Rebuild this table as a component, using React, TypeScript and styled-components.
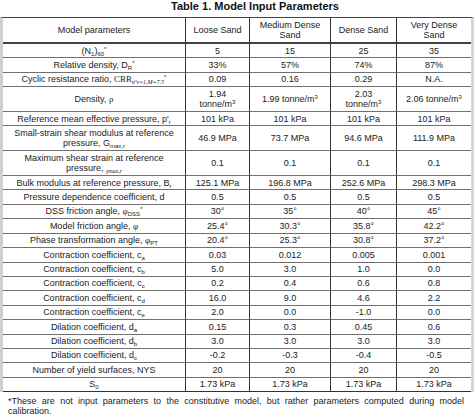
import React from "react";
import styled, { createGlobalStyle } from "styled-components";

const GlobalStyle = createGlobalStyle`
  html, body {
    margin: 0;
    padding: 0;
    background: #fff;
  }
  body {
    font-family: "Liberation Sans", Arial, sans-serif;
    color: #222;
  }
  * {
    box-sizing: border-box;
  }
`;

const Page = styled.div`
  width: 474px;
`;

const Title = styled.h1`
  margin: 0 0 5px;
  padding-left: 36px;
  font-size: 11px;
  line-height: 12px;
  font-weight: bold;
  text-align: center;
  color: #111;
`;

const Table = styled.table`
  width: 474px;
  table-layout: fixed;
  border-collapse: separate;
  border-spacing: 0;
  border-top: 1px solid #444;
  border-left: 3px solid #cfcfcf;
  border-right: 3px solid #d6d6d6;
`;

const HeadCell = styled.th<{ $first?: boolean }>`
  font-weight: normal;
  font-size: 9px;
  line-height: 10.5px;
  padding: 1.5px 3px;
  height: 26px;
  text-align: center;
  vertical-align: middle;
  border-bottom: 2px solid #444;
  border-left: ${(p) => (p.$first ? "none" : "1px solid #333")};
`;

const Cell = styled.td<{ $first?: boolean; $last?: boolean }>`
  font-size: 9px;
  line-height: 10.4px;
  padding: 1.5px 3px;
  text-align: center;
  vertical-align: middle;
  white-space: nowrap;
  border-bottom: 1px solid ${(p) => (p.$last ? "#333" : "#707070")};
  border-left: ${(p) => (p.$first ? "none" : "1px solid #333")};
`;

const Sub = styled.sub`
  font-size: 6px;
  line-height: 0;
  vertical-align: -1.5px;
`;

const Sup = styled.sup`
  font-size: 6px;
  line-height: 0;
  vertical-align: 3px;
`;

const Serif = styled.span`
  font-family: "Liberation Serif", "Times New Roman", serif;
`;

const SerifSub = styled(Sub)`
  font-family: "Liberation Serif", "Times New Roman", serif;
  font-style: italic;
`;

const Footnote = styled.p`
  margin: 4px 10px 0 8px;
  font-size: 9px;
  line-height: 10px;
  text-align: justify;
  text-align-last: left;
`;

type Row = { label: React.ReactNode; values: React.ReactNode[] };

const all = (v: string) => [v, v, v, v];

const rows: Row[] = [
  {
    label: (
      <>
        (N<Sub>1</Sub>)<Sub>60</Sub>
        <Sup>*</Sup>
      </>
    ),
    values: ["5", "15", "25", "35"],
  },
  {
    label: (
      <>
        Relative density, D<Sub>R</Sub>
        <Sup>*</Sup>
      </>
    ),
    values: ["33%", "57%", "74%", "87%"],
  },
  {
    label: (
      <>
        Cyclic resistance ratio,{" "}
        <Serif>
          CRR<SerifSub>σ'v=1,M=7.5</SerifSub>
        </Serif>
        <Sup>*</Sup>
      </>
    ),
    values: ["0.09", "0.16", "0.29", "N.A."],
  },
  {
    label: (
      <>
        Density, <Serif>ρ</Serif>
      </>
    ),
    values: [
      <>
        1.94
        <br />
        tonne/m<Sup>3</Sup>
      </>,
      <>
        1.99 tonne/m<Sup>3</Sup>
      </>,
      <>
        2.03
        <br />
        tonne/m<Sup>3</Sup>
      </>,
      <>
        2.06 tonne/m<Sup>3</Sup>
      </>,
    ],
  },
  {
    label: (
      <>
        Reference mean effective pressure, p'<Sub>r</Sub>
      </>
    ),
    values: all("101 kPa"),
  },
  {
    label: (
      <>
        Small-strain shear modulus at reference
        <br />
        pressure, G<Sub>max,r</Sub>
      </>
    ),
    values: ["46.9 MPa", "73.7 MPa", "94.6 MPa", "111.9 MPa"],
  },
  {
    label: (
      <>
        Maximum shear strain at reference
        <br />
        pressure, <SerifSub>γmax,r</SerifSub>
      </>
    ),
    values: all("0.1"),
  },
  {
    label: (
      <>
        Bulk modulus at reference pressure, B<Sub>r</Sub>
      </>
    ),
    values: ["125.1 MPa", "196.8 MPa", "252.6 MPa", "298.3 MPa"],
  },
  { label: "Pressure dependence coefficient, d", values: all("0.5") },
  {
    label: (
      <>
        DSS friction angle, <Serif>φ</Serif>
        <Sub>DSS</Sub>
        <Sup>*</Sup>
      </>
    ),
    values: ["30°", "35°", "40°", "45°"],
  },
  {
    label: (
      <>
        Model friction angle, <Serif>φ</Serif>
      </>
    ),
    values: ["25.4°", "30.3°", "35.8°", "42.2°"],
  },
  {
    label: (
      <>
        Phase transformation angle, <Serif>φ</Serif>
        <Sub>PT</Sub>
      </>
    ),
    values: ["20.4°", "25.3°", "30.8°", "37.2°"],
  },
  {
    label: (
      <>
        Contraction coefficient, c<Sub>a</Sub>
      </>
    ),
    values: ["0.03", "0.012", "0.005", "0.001"],
  },
  {
    label: (
      <>
        Contraction coefficient, c<Sub>b</Sub>
      </>
    ),
    values: ["5.0", "3.0", "1.0", "0.0"],
  },
  {
    label: (
      <>
        Contraction coefficient, c<Sub>c</Sub>
      </>
    ),
    values: ["0.2", "0.4", "0.6", "0.8"],
  },
  {
    label: (
      <>
        Contraction coefficient, c<Sub>d</Sub>
      </>
    ),
    values: ["16.0", "9.0", "4.6", "2.2"],
  },
  {
    label: (
      <>
        Contraction coefficient, c<Sub>e</Sub>
      </>
    ),
    values: ["2.0", "0.0", "-1.0", "0.0"],
  },
  {
    label: (
      <>
        Dilation coefficient, d<Sub>a</Sub>
      </>
    ),
    values: ["0.15", "0.3", "0.45", "0.6"],
  },
  {
    label: (
      <>
        Dilation coefficient, d<Sub>b</Sub>
      </>
    ),
    values: all("3.0"),
  },
  {
    label: (
      <>
        Dilation coefficient, d<Sub>c</Sub>
      </>
    ),
    values: ["-0.2", "-0.3", "-0.4", "-0.5"],
  },
  { label: "Number of yield surfaces, NYS", values: all("20") },
  {
    label: (
      <>
        S<Sub>0</Sub>
      </>
    ),
    values: all("1.73 kPa"),
  },
];

const headers: React.ReactNode[] = [
  "Loose Sand",
  <>
    Medium Dense
    <br />
    Sand
  </>,
  "Dense Sand",
  <>
    Very Dense
    <br />
    Sand
  </>,
];

const widths = [182, 64, 81, 66, 75];

export default function App() {
  return (
    <Page>
      <GlobalStyle />
      <Title>Table 1. Model Input Parameters</Title>
      <Table>
        <colgroup>
          {widths.map((w, i) => (
            <col key={i} style={{ width: w }} />
          ))}
        </colgroup>
        <thead>
          <tr>
            <HeadCell $first>Model parameters</HeadCell>
            {headers.map((h, i) => (
              <HeadCell key={i}>{h}</HeadCell>
            ))}
          </tr>
        </thead>
        <tbody>
          {rows.map((r, i) => {
            const last = i === rows.length - 1;
            return (
              <tr key={i}>
                <Cell $first $last={last}>
                  {r.label}
                </Cell>
                {r.values.map((v, j) => (
                  <Cell key={j} $last={last}>
                    {v}
                  </Cell>
                ))}
              </tr>
            );
          })}
        </tbody>
      </Table>
      <Footnote>
        *These are not input parameters to the constitutive model, but rather
        parameters computed during model calibration.
      </Footnote>
    </Page>
  );
}
